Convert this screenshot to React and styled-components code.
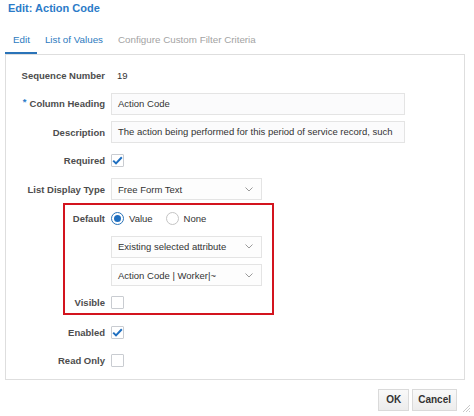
import React from "react";
import styled, { createGlobalStyle } from "styled-components";

const Global = createGlobalStyle`
  html, body { margin: 0; padding: 0; background: #fff; }
  body { font-family: "Liberation Sans", Arial, sans-serif; }
  * { box-sizing: border-box; }
`;

const Page = styled.div`
  position: relative;
  width: 474px;
  height: 416px;
  padding-left: 5px;
`;

const Title = styled.div`
  padding-left: 3px;
  height: 16px;
  line-height: 16px;
  font-size: 11px;
  font-weight: bold;
  color: #2b7bc8;
`;

const Tabs = styled.div`
  display: flex;
  align-items: flex-end;
  height: 38px;
`;

const Tab = styled.div`
  padding: 0 7px 0 8px;
  height: 26px;
  line-height: 24px;
  font-size: 9.8px;
  color: ${(p) => (p.$disabled ? "#a3a3a3" : "#2d7bc0")};
  border-bottom: 2px solid ${(p) => (p.$active ? "#2a73b8" : "transparent")};
`;

const Panel = styled.div`
  width: 460px;
  border: 1px solid #dedede;
  padding: 9px 0 7px;
  display: flex;
  flex-direction: column;
  gap: 6.5px;
`;

const Row = styled.div`
  display: flex;
  align-items: center;
  gap: 6px;
  height: ${(p) => p.$h || 22}px;
`;

const Label = styled.div`
  width: ${(p) => p.$w || 99}px;
  flex: none;
  text-align: right;
  font-size: 9.5px;
  font-weight: bold;
  color: #4d4d4d;
  white-space: nowrap;
`;

const Req = styled.span`
  color: #2b7bc8;
  font-weight: bold;
  margin-right: 3px;
  position: relative;
  top: -2px;
`;

const Value = styled.div`
  padding-left: 6px;
  font-size: 9.5px;
  color: #333;
`;

const TextInput = styled.div`
  width: 294px;
  height: 22px;
  border: 1px solid #e4e4e4;
  background: #fbfbfc;
  font-size: 9.5px;
  color: #333;
  line-height: 20px;
  padding: 0 6px;
  white-space: nowrap;
  overflow: hidden;
`;

const SelectBox = styled.div`
  width: 151px;
  height: 22px;
  border: 1px solid #e4e4e4;
  background: #fdfdfd;
  display: flex;
  align-items: center;
  justify-content: space-between;
  padding: 0 8px 0 6px;
  font-size: 9.5px;
  color: #333;
`;

const Highlight = styled.div`
  margin: -3.5px 0 0 57px;
  width: 211px;
  border: 2px solid #d3141e;
  padding-top: 2px;
  display: flex;
  flex-direction: column;
  gap: 6.5px;
`;

const Box = styled.div`
  width: 13px;
  height: 13px;
  border: 1px solid #c9ccd1;
  background: #fff;
  border-radius: 1px;
  display: flex;
  align-items: center;
  justify-content: center;
`;

const RadioGroup = styled.div`
  display: flex;
  align-items: center;
  gap: 5px;
  font-size: 9.5px;
  color: #333;
`;

const RadioCircle = styled.div`
  width: 13px;
  height: 13px;
  border-radius: 50%;
  border: 1px solid ${(p) => (p.$on ? "#2a73b8" : "#c4c4c4")};
  background: #fff;
  display: flex;
  align-items: center;
  justify-content: center;
  &::after {
    content: "";
    display: ${(p) => (p.$on ? "block" : "none")};
    width: 7px;
    height: 7px;
    border-radius: 50%;
    background: #1f6fc0;
  }
`;

const RadioLabel = styled.span`
  margin-right: 8px;
`;

const Footer = styled.div`
  display: flex;
  justify-content: flex-end;
  gap: 3px;
  padding-right: 17px;
  margin-top: 9px;
`;

const Button = styled.div`
  height: 22px;
  padding: 0 ${(p) => p.$px || 7}px;
  border: 1px solid #dadada;
  background: linear-gradient(#f9f9f9, #ececec);
  font-size: 10px;
  font-weight: bold;
  color: #333;
  display: flex;
  align-items: center;
  justify-content: center;
`;

const Grip = styled.svg`
  position: absolute;
  right: 3px;
  bottom: 3px;
`;

const Chevron = () => (
  <svg width="8" height="5" viewBox="0 0 8 5">
    <path d="M0.5 0.5 L4 4 L7.5 0.5" fill="none" stroke="#9a9a9a" strokeWidth="1" />
  </svg>
);

const Check = ({ on }) => (
  <Box>
    {on && (
      <svg width="11" height="9" viewBox="0 0 11 9">
        <path d="M1.2 4.6 L4 7.4 L9.8 1.2" fill="none" stroke="#1f6fc0" strokeWidth="2" />
      </svg>
    )}
  </Box>
);

const Select = ({ children }) => (
  <SelectBox>
    <span>{children}</span>
    <Chevron />
  </SelectBox>
);

export default function App() {
  return (
    <Page>
      <Global />
      <Title>Edit: Action Code</Title>
      <Tabs>
        <Tab $active>Edit</Tab>
        <Tab>List of Values</Tab>
        <Tab $disabled>Configure Custom Filter Criteria</Tab>
      </Tabs>
      <Panel>
        <Row>
          <Label>Sequence Number</Label>
          <Value>19</Value>
        </Row>
        <Row>
          <Label>
            <Req>*</Req>Column Heading
          </Label>
          <TextInput>Action Code</TextInput>
        </Row>
        <Row>
          <Label>Description</Label>
          <TextInput>The action being performed for this period of service record, such</TextInput>
        </Row>
        <Row>
          <Label>Required</Label>
          <Check on />
        </Row>
        <Row>
          <Label>List Display Type</Label>
          <Select>Free Form Text</Select>
        </Row>
        <Highlight>
          <Row>
            <Label $w={40}>Default</Label>
            <RadioGroup>
              <RadioCircle $on />
              <RadioLabel>Value</RadioLabel>
              <RadioCircle />
              <RadioLabel>None</RadioLabel>
            </RadioGroup>
          </Row>
          <Row>
            <Label $w={40} />
            <Select>Existing selected attribute</Select>
          </Row>
          <Row>
            <Label $w={40} />
            <Select>Action Code | Worker|~</Select>
          </Row>
          <Row $h={20}>
            <Label $w={40}>Visible</Label>
            <Check />
          </Row>
        </Highlight>
        <Row>
          <Label>Enabled</Label>
          <Check on />
        </Row>
        <Row>
          <Label>Read Only</Label>
          <Check />
        </Row>
      </Panel>
      <Footer>
        <Button $px={7}>OK</Button>
        <Button $px={5}>Cancel</Button>
      </Footer>
      <Grip width="9" height="9" viewBox="0 0 9 9">
        <path d="M8 1 L1 8 M8 4 L4 8 M8 7 L7 8" stroke="#c8c8c8" strokeWidth="1" />
      </Grip>
    </Page>
  );
}
